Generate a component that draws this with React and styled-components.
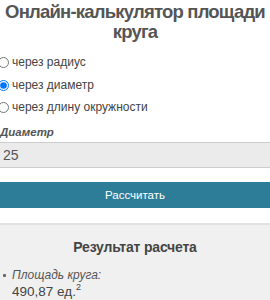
import styled, { createGlobalStyle } from "styled-components";

const GlobalStyle = createGlobalStyle`
  body {
    margin: 0;
    background: #fff;
    font-family: "Liberation Sans", Arial, sans-serif;
    color: #333;
  }
`;

const Page = styled.div`
  width: 270px;
  overflow: hidden;
`;

const Title = styled.h1`
  margin: 0;
  padding-top: 2px;
  font-size: 18.5px;
  line-height: 20px;
  font-weight: bold;
  text-align: center;
  color: #555;
  letter-spacing: -0.8px;
`;

const Options = styled.div`
  display: flex;
  flex-direction: column;
  gap: 7.5px;
  margin-top: 13px;
`;

const Option = styled.label`
  display: flex;
  align-items: center;
  font-size: 12px;
  line-height: 15px;
  color: #444;
`;

const Radio = styled.input`
  width: 11px;
  height: 11px;
  margin: 0 3px 0 -2px;
`;

const FieldLabel = styled.div`
  margin-top: 10px;
  font-size: 11.5px;
  font-weight: bold;
  font-style: italic;
  color: #555;
  line-height: 15px;
`;

const Input = styled.input`
  display: block;
  box-sizing: border-box;
  width: 100%;
  height: 26px;
  margin-top: 2px;
  padding: 0 3px;
  border: none;
  border-top: 1px solid #ccc;
  border-bottom: 1px solid #ccc;
  background: #ebebeb;
  font-family: "Liberation Sans", Arial, sans-serif;
  font-size: 14px;
  color: #555;
  outline: none;
`;

const Button = styled.button`
  display: block;
  width: 100%;
  height: 26px;
  margin-top: 14px;
  border: none;
  background: #2e7d98;
  color: #fff;
  font-family: "Liberation Sans", Arial, sans-serif;
  font-size: 11.5px;
`;

const Result = styled.section`
  margin-top: 15px;
  border-top: 2px solid #e2e2e2;
  background: #f0f0f0;
  padding: 13px 0 20px;
`;

const ResultTitle = styled.h2`
  margin: 0;
  font-size: 14px;
  line-height: 18px;
  font-weight: bold;
  text-align: center;
  color: #444;
  letter-spacing: -0.2px;
`;

const List = styled.ul`
  margin: 11px 0 0;
  padding: 0 0 0 12px;
  list-style: none;
`;

const Item = styled.li`
  position: relative;
  font-size: 12px;
  color: #555;
  &::before {
    content: "";
    position: absolute;
    left: -9px;
    top: 7px;
    width: 3px;
    height: 3px;
    border-radius: 1px;
    background: #666;
  }
`;

const ItemName = styled.div`
  font-style: italic;
  line-height: 16px;
`;

const ItemValue = styled.div`
  font-size: 13.5px;
  line-height: 18px;
  color: #444;
  sup {
    font-size: 9px;
    vertical-align: 6px;
    line-height: 0;
  }
`;

export default function App() {
  return (
    <Page>
      <GlobalStyle />
      <Title>Онлайн-калькулятор площади круга</Title>
      <Options>
        <Option>
          <Radio type="radio" name="mode" />
          через радиус
        </Option>
        <Option>
          <Radio type="radio" name="mode" defaultChecked />
          через диаметр
        </Option>
        <Option>
          <Radio type="radio" name="mode" />
          через длину окружности
        </Option>
      </Options>
      <FieldLabel>Диаметр</FieldLabel>
      <Input defaultValue="25" />
      <Button>Рассчитать</Button>
      <Result>
        <ResultTitle>Результат расчета</ResultTitle>
        <List>
          <Item>
            <ItemName>Площадь круга:</ItemName>
            <ItemValue>
              490,87 ед.<sup>2</sup>
            </ItemValue>
          </Item>
        </List>
      </Result>
    </Page>
  );
}
